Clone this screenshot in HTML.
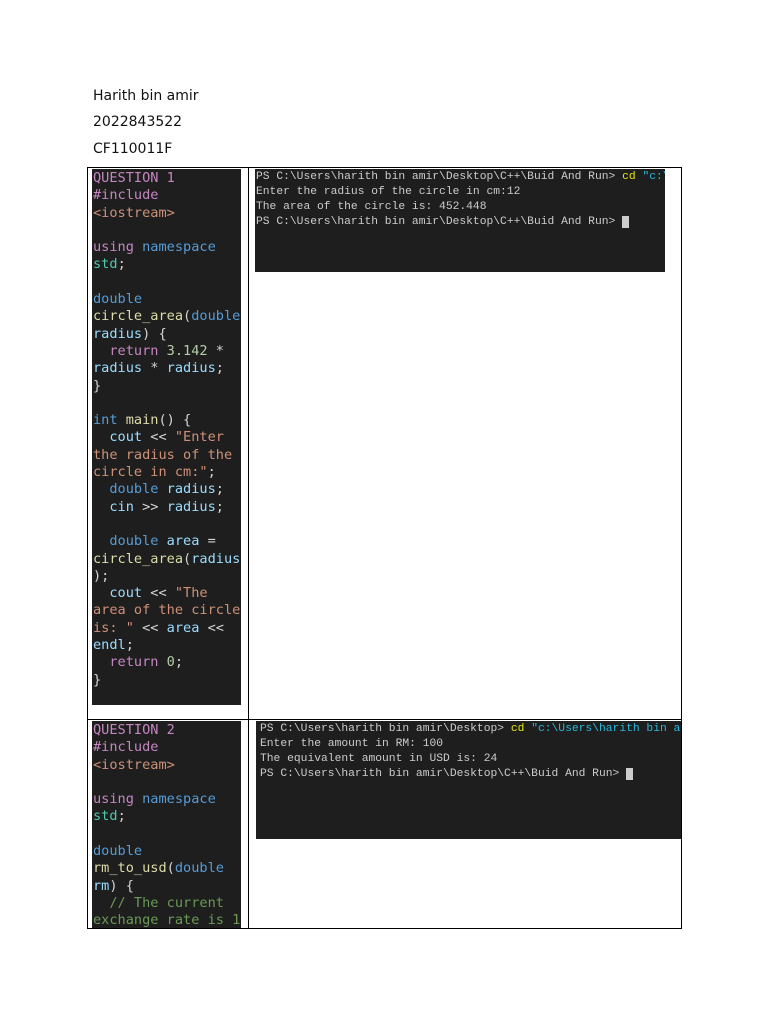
<!DOCTYPE html>
<html><head><meta charset="utf-8"><style>
body{margin:0;width:768px;height:1024px;background:#fff;position:relative;overflow:hidden;font-family:"DejaVu Sans","Liberation Sans",sans-serif}
.h{position:absolute;left:93px;font-size:14px;color:#111}
.b{position:absolute;background:#1e1e1e;overflow:hidden;box-sizing:border-box}
.code{font-family:"DejaVu Sans Mono",monospace;font-size:13.6px;line-height:17.3px;white-space:pre;color:#d4d4d4;padding:1px 0 0 1px}
.term{font-family:"Liberation Mono","DejaVu Sans Mono",monospace;font-size:11.3px;line-height:15px;white-space:pre;color:#ccc;padding:1px 0 0 1px}
.k{color:#c586c0}.bl{color:#569cd6}.t{color:#4ec9b0}.s{color:#ce9178}.f{color:#dcdcaa}.n{color:#b5cea8}.v{color:#9cdcfe}.c{color:#6a9955}.y{color:#e5e510}.cy{color:#29b8db}
.ln{position:absolute;background:#000}
</style></head><body>
<div class="h" style="top:88px">Harith bin amir</div>
<div class="h" style="top:114px">2022843522</div>
<div class="h" style="top:141px">CF110011F</div>

<div class="ln" style="left:87px;top:167px;width:595px;height:1px"></div>
<div class="ln" style="left:87px;top:928px;width:595px;height:1px"></div>
<div class="ln" style="left:87px;top:167px;width:1px;height:762px"></div>
<div class="ln" style="left:681px;top:167px;width:1px;height:762px"></div>
<div class="ln" style="left:248px;top:167px;width:1px;height:762px"></div>
<div class="ln" style="left:87px;top:719px;width:595px;height:1px"></div>

<div class="b code" style="left:92px;top:169px;width:149px;height:536px"><span class="k">QUESTION 1</span>
<span class="k">#include</span>
<span class="s">&lt;iostream&gt;</span>

<span class="k">using</span> <span class="bl">namespace</span>
<span class="t">std</span>;

<span class="bl">double</span>
<span class="f">circle_area</span>(<span class="bl">double</span>
<span class="v">radius</span>) {
  <span class="k">return</span> <span class="n">3.142</span> *
<span class="v">radius</span> * <span class="v">radius</span>;
}

<span class="bl">int</span> <span class="f">main</span>() {
  <span class="v">cout</span> &lt;&lt; <span class="s">"Enter</span>
<span class="s">the radius of the</span>
<span class="s">circle in cm:"</span>;
  <span class="bl">double</span> <span class="v">radius</span>;
  <span class="v">cin</span> &gt;&gt; <span class="v">radius</span>;

  <span class="bl">double</span> <span class="v">area</span> =
<span class="f">circle_area</span>(<span class="v">radius</span>
);
  <span class="v">cout</span> &lt;&lt; <span class="s">"The</span>
<span class="s">area of the circle</span>
<span class="s">is: "</span> &lt;&lt; <span class="v">area</span> &lt;&lt;
<span class="v">endl</span>;
  <span class="k">return</span> <span class="n">0</span>;
}</div>

<div class="b term" style="left:255px;top:169px;width:410px;height:103px">PS C:\Users\harith bin amir\Desktop\C++\Buid And Run&gt; <span class="y">cd</span> <span class="cy">"c:\Users</span>
Enter the radius of the circle in cm:12
The area of the circle is: 452.448
PS C:\Users\harith bin amir\Desktop\C++\Buid And Run&gt; <span style="background:#ccc">&nbsp;</span></div>

<div class="b code" style="left:92px;top:721px;width:149px;height:207px"><span class="k">QUESTION 2</span>
<span class="k">#include</span>
<span class="s">&lt;iostream&gt;</span>

<span class="k">using</span> <span class="bl">namespace</span>
<span class="t">std</span>;

<span class="bl">double</span>
<span class="f">rm_to_usd</span>(<span class="bl">double</span>
<span class="v">rm</span>) {
  <span class="c">// The current</span>
<span class="c">exchange rate is 1</span></div>

<div class="b term" style="left:256px;top:721px;width:425px;height:118px;padding-left:4px">PS C:\Users\harith bin amir\Desktop&gt; <span class="y">cd</span> <span class="cy">"c:\Users\harith bin amir</span>
Enter the amount in RM: 100
The equivalent amount in USD is: 24
PS C:\Users\harith bin amir\Desktop\C++\Buid And Run&gt; <span style="background:#ccc">&nbsp;</span></div>
</body></html>
